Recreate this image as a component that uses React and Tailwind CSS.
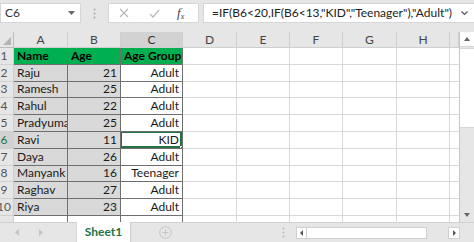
import React from "react";

const rows = [
  ["Name", "Age", "Age Group"],
  ["Raju", "21", "Adult"],
  ["Ramesh", "25", "Adult"],
  ["Rahul", "22", "Adult"],
  ["Pradyuma", "25", "Adult"],
  ["Ravi", "11", "KID"],
  ["Daya", "26", "Adult"],
  ["Manyank", "16", "Teenager"],
  ["Raghav", "27", "Adult"],
  ["Riya", "23", "Adult"],
];

const cols = ["A", "B", "C", "D", "E", "F", "G", "H", ""];

const gridCols = "grid grid-cols-[14px_54px_53px_62px_54px_53px_53px_54px_53px_9px]";

function RowHead({ n, active }) {
  return (
    <div
      className={`h-[16.8px] overflow-hidden flex items-center border-b border-r border-[#cfcfcf] ${
        active ? "bg-[#d2d2d2] text-[#217346]" : "bg-[#e6e6e6] text-[#555]"
      }`}
    >
      <div className="w-[8px] flex justify-center text-[12px] leading-none whitespace-nowrap">{n}</div>
    </div>
  );
}

function DataRow({ r, i }) {
  const head = i === 0;
  const active = i === 5;
  const base = "h-[16.8px] overflow-hidden whitespace-nowrap flex items-center text-[12px] leading-none border-r border-b border-[#6f6f6f]";
  const fillAB = head ? "bg-[#00b050] font-bold text-black" : "bg-[#d9d9d9] text-[#1a1a1a]";
  const fillC = head ? "bg-[#00b050] font-bold text-black" : "bg-white text-[#1a1a1a]";
  return (
    <>
      <RowHead n={i + 1} active={active} />
      <div className={`${base} ${fillAB} pl-[3px] pr-0`}>{r[0]}</div>
      <div className={`${base} ${fillAB} px-[3px] ${head ? "" : "justify-end"}`}>{r[1]}</div>
      <div className={`${base} ${fillC} px-[3px] ${head ? "" : "justify-end"} relative`}>
        {r[2]}
        {active && (
          <>
            <div className="absolute inset-0 -top-px -left-px border-2 border-[#217346]" />
            <div className="absolute -right-[3px] -bottom-[3px] w-[5px] h-[5px] bg-[#217346] border border-white" />
          </>
        )}
      </div>
      {[0, 1, 2, 3, 4].map((k) => (
        <div key={k} className="h-[16.8px] bg-white border-r border-b border-[#d9d9d9]" />
      ))}
      <div className="h-[16.8px] bg-white border-b border-[#d9d9d9]" />
    </>
  );
}

export default function App() {
  return (
    <div
      className="w-[474px] h-[242px] overflow-hidden bg-[#e6e6e6] flex flex-col"
      style={{ fontFamily: "Lato, 'Liberation Sans', sans-serif" }}
    >
      {/* formula bar */}
      <div className="h-[32px] flex items-start pt-[3px] shrink-0">
        <div className="w-[81px] h-[20px] bg-white border border-[#d6d6d6] flex items-center pl-[4px] pr-[5px] justify-between">
          <span className="text-[12px] text-[#333]">C6</span>
          <svg width="7" height="4" viewBox="0 0 7 4">
            <path d="M0 0h7L3.5 4z" fill="#666" />
          </svg>
        </div>
        <div className="w-[27px] flex justify-center pt-[5px]">
          <svg width="3" height="11" viewBox="0 0 3 11">
            <circle cx="1.5" cy="1.5" r="1" fill="#aaa" />
            <circle cx="1.5" cy="5.5" r="1" fill="#aaa" />
            <circle cx="1.5" cy="9.5" r="1" fill="#aaa" />
          </svg>
        </div>
        <div className="w-[91px] h-[20px] bg-white border border-[#d6d6d6] flex items-center">
          <svg className="ml-[10px]" width="10" height="10" viewBox="0 0 10 10">
            <path d="M1 1l8 8M9 1l-8 8" stroke="#b8b8b8" strokeWidth="1.2" />
          </svg>
          <svg className="ml-[20px]" width="11" height="9" viewBox="0 0 11 9">
            <path d="M1 5l3 3 6-7" stroke="#b8b8b8" strokeWidth="1.2" fill="none" />
          </svg>
          <span
            className="ml-[17px] text-[13px] italic text-[#444]"
            style={{ fontFamily: "'Liberation Serif', serif" }}
          >
            f<sub className="text-[8px]">x</sub>
          </span>
        </div>
        <div className="ml-[4px] flex-1 h-[20px] bg-white border border-[#d6d6d6] border-r-0 flex items-center pl-[8px] pr-[6px] justify-between">
          <span className="text-[12px] text-[#222] whitespace-nowrap">
            =IF(B6&lt;20,IF(B6&lt;13,"KID","Teenager"),"Adult")
          </span>
          <svg width="7" height="5" viewBox="0 0 7 5">
            <path d="M0.5 0.5l3 3 3-3" stroke="#555" strokeWidth="1.2" fill="none" />
          </svg>
        </div>
      </div>

      {/* sheet area */}
      <div className="h-[190px] flex shrink-0">
        <div className="w-[460px] bg-white border-r border-[#c6c6c6] overflow-hidden">
          <div className={gridCols}>
            <div className="h-[16px] bg-[#e6e6e6] border-r border-b border-[#bdbdbd] flex items-end justify-end p-[2px]">
              <svg width="8" height="8" viewBox="0 0 8 8">
                <path d="M8 0v8H0z" fill="#b4b4b4" />
              </svg>
            </div>
            {cols.map((c, i) => (
              <div
                key={i}
                className={`h-[16px] flex items-center justify-center text-[12px] leading-none border-b border-r border-[#cfcfcf] ${
                  c === "C" ? "bg-[#d2d2d2] text-[#333]" : "bg-[#e6e6e6] text-[#444]"
                }`}
              >
                {c}
              </div>
            ))}
            {rows.map((r, i) => (
              <DataRow key={i} r={r} i={i} />
            ))}
            <div className="h-[6px] bg-[#e6e6e6] border-r border-[#cfcfcf]" />
            <div className="h-[6px] border-r border-[#6f6f6f]" />
            <div className="h-[6px] border-r border-[#6f6f6f]" />
            <div className="h-[6px] border-r border-[#6f6f6f]" />
            {[0, 1, 2, 3, 4].map((k) => (
              <div key={k} className="h-[6px] border-r border-[#d9d9d9]" />
            ))}
            <div className="h-[6px]" />
          </div>
        </div>
        {/* vertical scrollbar */}
        <div className="w-[14px] flex flex-col bg-[#e6e6e6]">
          <div className="h-[15px] bg-white flex items-center justify-center border-b border-[#d6d6d6]">
            <svg width="6" height="4" viewBox="0 0 6 4">
              <path d="M0 4L3 0l3 4z" fill="#666" />
            </svg>
          </div>
          <div className="h-[80px] bg-white mt-px border-y border-[#d6d6d6]" />
          <div className="flex-1" />
          <div className="h-[14px] flex items-center justify-center">
            <svg width="6" height="4" viewBox="0 0 6 4">
              <path d="M0 0h6L3 4z" fill="#666" />
            </svg>
          </div>
        </div>
      </div>

      {/* tab bar */}
      <div className="flex-1 flex items-stretch border-t border-[#d0d0d0]">
        <div className="w-[77px] flex items-center">
          <svg className="ml-[15px]" width="4" height="7" viewBox="0 0 4 7">
            <path d="M4 0v7L0 3.5z" fill="#c4c4c4" />
          </svg>
          <svg className="ml-[20px]" width="4" height="7" viewBox="0 0 4 7">
            <path d="M0 0v7l4-3.5z" fill="#c4c4c4" />
          </svg>
        </div>
        <div className="w-[53px] bg-white flex items-center justify-center -mt-px shadow-[0_1px_2px_rgba(0,0,0,0.2)]">
          <span className="text-[12px] font-bold text-[#217346]">Sheet1</span>
        </div>
        <div className="w-[70px] flex items-center border-l border-[#d0d0d0]">
          <svg className="ml-[28px]" width="13" height="13" viewBox="0 0 13 13">
            <circle cx="6.5" cy="6.5" r="5.8" stroke="#c4c4c4" fill="none" />
            <path d="M6.5 3.5v6M3.5 6.5h6" stroke="#c4c4c4" />
          </svg>
        </div>
        <div className="flex-1 flex items-center">
          <svg className="ml-[82px]" width="3" height="11" viewBox="0 0 3 11">
            <circle cx="1.5" cy="1.5" r="1" fill="#bbb" />
            <circle cx="1.5" cy="5.5" r="1" fill="#bbb" />
            <circle cx="1.5" cy="9.5" r="1" fill="#bbb" />
          </svg>
          <div className="ml-[11px] h-[12px] w-[164px] flex items-stretch">
            <div className="w-[11px] bg-white border border-[#d0d0d0] flex items-center justify-center">
              <svg width="3" height="6" viewBox="0 0 3 6">
                <path d="M3 0v6L0 3z" fill="#555" />
              </svg>
            </div>
            <div className="w-[120px] bg-white border-y border-r border-[#d0d0d0]" />
            <div className="flex-1" />
            <div className="w-[12px] bg-white border border-[#d0d0d0] flex items-center justify-center">
              <svg width="3" height="6" viewBox="0 0 3 6">
                <path d="M0 0v6l3-3z" fill="#555" />
              </svg>
            </div>
          </div>
        </div>
      </div>
    </div>
  );
}
